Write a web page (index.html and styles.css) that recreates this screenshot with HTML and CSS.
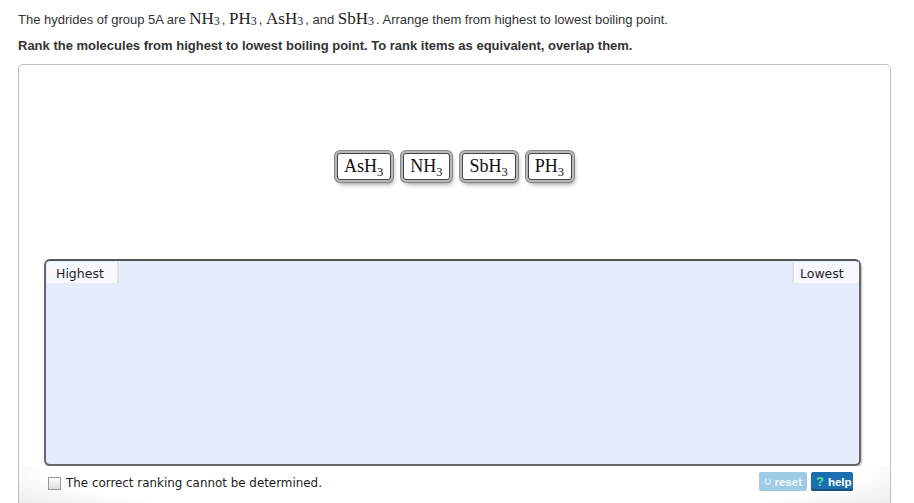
FILE: index.html
```html
<!DOCTYPE html>
<html lang="en">
<head>
    <meta charset="UTF-8">
    <title>Ranking - Boiling Point</title>
    <link rel="stylesheet" href="styles.css">
</head>
<body>

    <!-- Question text -->
    <p class="prompt">
        The hydrides of group 5A are <span class="math">NH<sub>3</sub></span>, <span class="math">PH<sub>3</sub></span>, <span class="math">AsH<sub>3</sub></span>, and <span class="math">SbH<sub>3</sub></span>. Arrange them from highest to lowest boiling point.
    </p>
    <p class="instruction">Rank the molecules from highest to lowest boiling point. To rank items as equivalent, overlap them.</p>

    <!-- Ranking widget -->
    <div class="ranking-panel">
        <div class="tile-tray">
            <div class="tile">AsH<sub>3</sub></div>
            <div class="tile">NH<sub>3</sub></div>
            <div class="tile">SbH<sub>3</sub></div>
            <div class="tile">PH<sub>3</sub></div>
        </div>

        <div class="drop-zone">
            <div class="zone-labels">
                <span class="zone-label left">Highest</span>
                <span class="zone-label right">Lowest</span>
            </div>
        </div>

        <div class="panel-footer">
            <label class="cant-rank">
                <span class="check-box"></span>
                The correct ranking cannot be determined.
            </label>
            <div class="tool-buttons">
                <button class="tool-btn reset-btn">
                    <svg width="11" height="11" viewBox="0 0 12 12">
                        <path d="M3.2 2.6 A4.3 4.3 0 1 0 8.8 2.6" fill="none" stroke="#e4f2fa" stroke-width="1.7"/>
                        <path d="M1.2 1.0 L4.8 1.4 L3.4 4.6 Z" fill="#e4f2fa"/>
                    </svg>
                    reset
                </button>
                <button class="tool-btn help-btn"><span class="q">?</span> help</button>
            </div>
        </div>
    </div>

</body>
</html>
```

FILE: styles.css
```css
/* General Styles */
* {
    margin: 0;
    padding: 0;
    box-sizing: border-box;
}

body {
    font-family: 'Liberation Sans', Arial, sans-serif;
    font-size: 13px;
    color: #333;
    background: #fff;
    padding: 10px 23px 0 18px;
    height: 503px;
    overflow: hidden;
}

/* Question text */
.prompt {
    line-height: 18px;
}

.math {
    font-family: 'Liberation Serif', 'Times New Roman', serif;
    font-size: 17px;
    color: #222;
    margin-right: 2px;
}

.math sub {
    font-size: 12px;
    vertical-align: -1px;
    line-height: 0;
}

.instruction {
    font-weight: bold;
    margin-top: 9px;
    line-height: 16px;
}

/* Ranking widget */
.ranking-panel {
    margin-top: 10px;
    border: 1px solid #bdbdbd;
    border-radius: 5px;
    height: 480px;
    background: #fff;
}

.tile-tray {
    display: flex;
    justify-content: center;
    gap: 12px;
    padding-top: 88px;
    height: 194px;
}

.tile {
    height: 27px;
    padding: 0 7px 0 6px;
    background: #fff;
    border: 1px solid #444;
    border-radius: 3px;
    box-shadow: 0 0 0 2px #b8b8b8, 0 0 0 3px #858585, 2px 4px 5px rgba(0, 0, 0, 0.45);
    font-family: 'Liberation Serif', 'Times New Roman', serif;
    font-size: 18px;
    color: #111;
    line-height: 25px;
}

.tile sub {
    font-size: 12.5px;
    vertical-align: -4px;
    line-height: 0;
}

.drop-zone {
    margin-left: 25px;
    width: 817px;
    height: 207px;
    background: #e5edfc;
    border: 2px solid #666;
    border-top-color: #555;
    border-radius: 6px;
    box-shadow: 1px 2px 2px rgba(0, 0, 0, 0.25);
}

.zone-labels {
    display: flex;
    justify-content: space-between;
    padding-top: 1px;
}

.zone-label {
    font-family: 'DejaVu Sans', Verdana, sans-serif;
    font-size: 12.5px;
    color: #222;
    background: #f6f8fd;
    height: 21px;
    line-height: 23px;
    padding: 0 8px;
}

.zone-label.left {
    margin-left: 1px;
    border-right: 2px solid #dde1e8;
    width: 72px;
    padding-left: 9px;
}

.zone-label.right {
    border-left: 2px solid #dde1e8;
    width: 67px;
    padding-left: 6px;
}

/* Footer row */
.panel-footer {
    display: flex;
    justify-content: space-between;
    padding: 6px 37px 0 29px;
    height: 60px;
    align-items: flex-start;
    background: radial-gradient(ellipse 58% 100% at 50% 5%, #fff 80%, #efefef 100%);
}

.cant-rank {
    display: flex;
    align-items: center;
    gap: 5px;
    font-family: 'DejaVu Sans', Verdana, sans-serif;
    font-size: 11.9px;
    color: #222;
    margin-top: 4px;
}

.check-box {
    width: 13px;
    height: 13px;
    border: 1px solid #999;
    background: linear-gradient(#fff, #ddd);
    display: inline-block;
}

.tool-buttons {
    display: flex;
    gap: 4px;
}

.tool-btn {
    border: none;
    height: 19px;
    border-radius: 2px;
    font-family: 'Liberation Sans', Arial, sans-serif;
    font-weight: bold;
    font-size: 11.5px;
    color: #fff;
    padding: 0 5px;
    display: flex;
    align-items: center;
    gap: 3px;
}

.reset-btn {
    background: #9fcbe6;
    color: #f2f9fd;
    width: 48px;
}

.help-btn {
    background: #1c6fae;
    box-shadow: inset 0 -2px 0 #125487;
    width: 42px;
    gap: 4px;
}

.help-btn .q {
    color: #5fe0b0;
    font-size: 13px;
}
```
